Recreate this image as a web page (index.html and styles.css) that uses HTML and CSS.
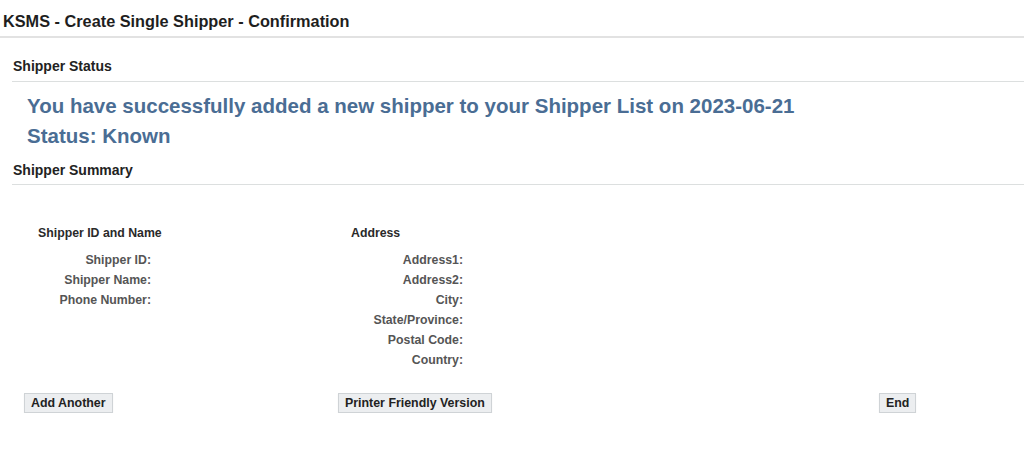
FILE: index.html
```html
<!DOCTYPE html>
<html>
<head>
<meta charset="utf-8">
<title>KSMS - Create Single Shipper - Confirmation</title>
<link rel="stylesheet" href="styles.css">
</head>
<body>
<h1 class="page-title">KSMS - Create Single Shipper - Confirmation</h1>
<h2 class="section-head">Shipper Status</h2>
<div class="status-msg">
  <div>You have successfully added a new shipper to your Shipper List on 2023-06-21</div>
  <div>Status: Known</div>
</div>
<h2 class="section-head summary-head">Shipper Summary</h2>
<div class="summary">
  <div class="col col-id">
    <div class="col-title">Shipper ID and Name</div>
    <div class="field"><span class="label">Shipper ID:</span><span class="value"></span></div>
    <div class="field"><span class="label">Shipper Name:</span><span class="value"></span></div>
    <div class="field"><span class="label">Phone Number:</span><span class="value"></span></div>
  </div>
  <div class="col col-addr">
    <div class="col-title">Address</div>
    <div class="field"><span class="label">Address1:</span><span class="value"></span></div>
    <div class="field"><span class="label">Address2:</span><span class="value"></span></div>
    <div class="field"><span class="label">City:</span><span class="value"></span></div>
    <div class="field"><span class="label">State/Province:</span><span class="value"></span></div>
    <div class="field"><span class="label">Postal Code:</span><span class="value"></span></div>
    <div class="field"><span class="label">Country:</span><span class="value"></span></div>
  </div>
</div>
<div class="actions">
  <div><button class="btn">Add Another</button></div>
  <div><button class="btn">Printer Friendly Version</button></div>
  <div><button class="btn">End</button></div>
</div>
</body>
</html>
```
FILE: styles.css
```css
html, body {
  margin: 0;
  padding: 0;
  background: #ffffff;
}
body {
  font-family: "Liberation Sans", Arial, sans-serif;
  color: #222;
}
.page-title {
  margin: 0;
  font-size: 16.3px;
  font-weight: bold;
  color: #1e1e1e;
  line-height: 20px;
  padding: 11px 0 5px 3px;
  border-bottom: 2px solid #e2e2e2;
}
.section-head {
  margin: 0 0 0 12px;
  font-size: 14px;
  font-weight: bold;
  color: #222;
  line-height: 20px;
  padding: 18px 0 5px 1px;
  border-bottom: 1px solid #dcdfdf;
}
.summary-head {
  padding-top: 9px;
  padding-bottom: 4px;
}
.status-msg {
  margin: 9px 0 0 27px;
  font-size: 20.5px;
  font-weight: bold;
  line-height: 30px;
  color: #4a6d94;
}
.summary {
  display: grid;
  grid-template-columns: 313px 200px;
  margin: 38px 0 0 38px;
}
.col-title {
  font-size: 12.3px;
  font-weight: bold;
  color: #2a2a2a;
  line-height: 20px;
  margin-bottom: 7px;
}
.field {
  display: flex;
  line-height: 20px;
  font-size: 12.3px;
  font-weight: bold;
  color: #555;
}
.col-id .label {
  width: 113px;
  text-align: right;
}
.col-addr .label {
  width: 112px;
  text-align: right;
}
.actions {
  display: grid;
  grid-template-columns: 314px 541px auto;
  margin: 23px 0 0 24px;
}
.btn {
  font-family: "Liberation Sans", Arial, sans-serif;
  font-size: 12.4px;
  font-weight: bold;
  color: #222;
  background: #eceef0;
  border: 1px solid #cfd3d6;
  border-radius: 0;
  padding: 2px 6px;
  line-height: 14px;
  height: 20px;
  box-shadow: 0 1px 1px rgba(0,0,0,0.08);
}
```
